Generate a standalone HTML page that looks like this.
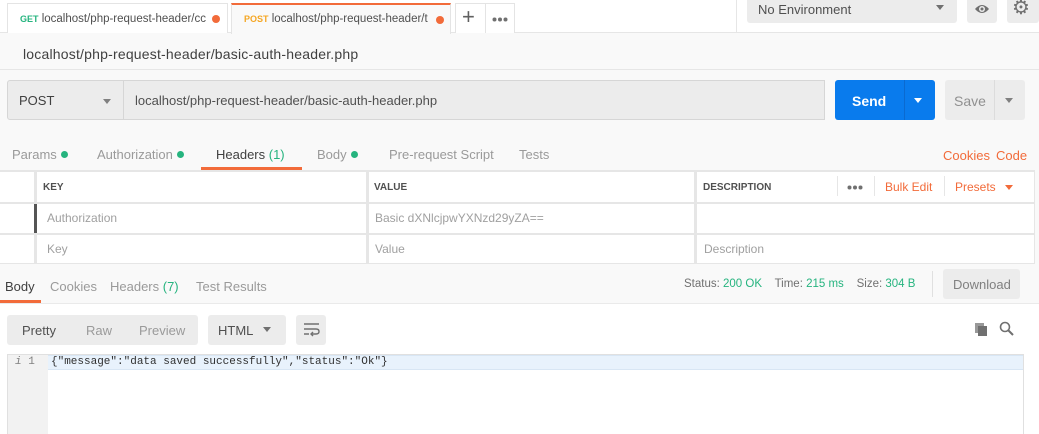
<!DOCTYPE html>
<html><head><style>
*{box-sizing:border-box;margin:0;padding:0}
body{width:1039px;height:434px;overflow:hidden;background:#f9f9f9;font-family:"Liberation Sans",sans-serif;font-size:13px;color:#505050;position:relative}
.a{position:absolute;white-space:nowrap}
.dot{display:inline-block;width:7px;height:7px;border-radius:50%;background:#26b47f;margin-left:4px;vertical-align:1px}
.od{display:inline-block;width:8px;height:8px;border-radius:50%;background:#f26b3a}
.g{color:#26b47f}.o{color:#f26b3a}.l{color:#9a9a9a}
</style></head><body>
<div class="a" style="left:0;top:0;width:1039px;height:33px;background:#fff;border-bottom:1px solid #e6e6e6"></div>
<div class="a" style="left:7px;top:3px;width:221px;height:30px;border:1px solid #e4e4e4;border-bottom:none;background:#fff;padding:9px 12px;font-size:11.5px"><b class="g" style="font-size:9px">GET</b> localhost/php-request-header/cc</div>
<div class="od a" style="left:212px;top:15px"></div>
<div class="a" style="left:231px;top:3px;width:220px;height:31px;border:1px solid #e4e4e4;border-top:2px solid #f26b3a;border-bottom:none;background:#f9f9f9;padding:8px 12px;font-size:11.5px;overflow:hidden"><b style="color:#f5a623;font-size:9px">POST</b> localhost/php-request-header/t</div>
<div class="od a" style="left:436px;top:16px"></div>
<div class="a" style="left:455px;top:3px;width:60px;height:30px;border:1px solid #e4e4e4;border-bottom:none;background:#fff"></div>
<div class="a" style="left:485px;top:3px;width:1px;height:30px;background:#e4e4e4"></div>
<div class="a" style="left:462px;top:4px;font-size:22px;color:#606060">+</div>
<svg class="a" style="left:492px;top:17px" width="16" height="5"><circle cx="2.5" cy="2.5" r="2" fill="#707070"/><circle cx="8" cy="2.5" r="2" fill="#707070"/><circle cx="13.5" cy="2.5" r="2" fill="#707070"/></svg>
<div class="a" style="left:736px;top:0;width:1px;height:33px;background:#e6e6e6"></div>
<div class="a" style="left:747px;top:-6px;width:210px;height:29px;background:#ececec;border-radius:3px;padding:8px 11px;color:#505050">No Environment</div>
<div class="a" style="left:936px;top:5px;border:4px solid transparent;border-top:5px solid #707070"></div>
<div class="a" style="left:967px;top:-6px;width:30px;height:29px;background:#ececec;border-radius:3px"></div>
<svg class="a" style="left:974px;top:3px" width="16" height="12" viewBox="0 0 16 12"><path d="M1 6Q8-2 15 6Q8 14 1 6Z" fill="#707070"/><circle cx="8" cy="6" r="3" fill="#ececec"/><circle cx="8" cy="6" r="1.5" fill="#707070"/></svg>
<div class="a" style="left:1007px;top:-6px;width:32px;height:29px;background:#ececec;border-radius:3px"></div>
<div class="a" style="left:1012px;top:-5px;font-size:20px;color:#707070">⚙</div>
<div class="a" style="left:23px;top:46px;font-size:14px;color:#404040;letter-spacing:0.2px">localhost/php-request-header/basic-auth-header.php</div>
<div class="a" style="left:0;top:69px;width:1039px;height:1px;background:#e6e6e6"></div>
<div class="a" style="left:7px;top:80px;width:298px;height:40px;border:1px solid #d6d6d6;background:#ececec;border-radius:3px"></div>
<div class="a" style="left:123px;top:80px;width:1px;height:40px;background:#d6d6d6"></div>
<div class="a" style="left:19px;top:93px;color:#404040">POST</div>
<div class="a" style="left:103px;top:99px;border:4px solid transparent;border-top:5px solid #808080"></div>
<div class="a" style="left:124px;top:80px;width:701px;height:40px;border:1px solid #d6d6d6;border-left:none;background:#ececec"></div>
<div class="a" style="left:135px;top:93px;color:#505050">localhost/php-request-header/basic-auth-header.php</div>
<div class="a" style="left:835px;top:80px;width:100px;height:40px;background:#097bed;border-radius:3px"></div>
<div class="a" style="left:904px;top:80px;width:1px;height:40px;background:#0a6ad0"></div>
<div class="a" style="left:852px;top:93px;color:#fff;font-weight:bold;font-size:14px">Send</div>
<div class="a" style="left:914px;top:98px;border:4px solid transparent;border-top:5px solid #fff"></div>
<div class="a" style="left:945px;top:80px;width:80px;height:40px;background:#ececec;border-radius:3px"></div>
<div class="a" style="left:994px;top:80px;width:1px;height:40px;background:#dcdcdc"></div>
<div class="a" style="left:954px;top:93px;color:#909090;font-size:14px">Save</div>
<div class="a" style="left:1005px;top:98px;border:4px solid transparent;border-top:5px solid #808080"></div>
<div class="a l" style="left:12px;top:147px">Params<span class="dot"></span></div>
<div class="a l" style="left:97px;top:147px">Authorization<span class="dot"></span></div>
<div class="a" style="left:216px;top:147px;color:#404040">Headers <span class="g">(1)</span></div>
<div class="a" style="left:201px;top:167px;width:101px;height:3px;background:#f26b3a"></div>
<div class="a l" style="left:317px;top:147px">Body<span class="dot"></span></div>
<div class="a l" style="left:389px;top:147px">Pre-request Script</div>
<div class="a l" style="left:519px;top:147px">Tests</div>
<div class="a o" style="left:943px;top:148px">Cookies</div>
<div class="a o" style="left:996px;top:148px">Code</div>
<div class="a" style="left:0;top:170px;width:1035px;height:94px;background:#e6e6e6"></div>
<div class="a" style="left:0;top:172px;width:34px;height:30px;background:#fff"></div>
<div class="a" style="left:37px;top:172px;width:329px;height:30px;background:#fff"></div>
<div class="a" style="left:369px;top:172px;width:325px;height:30px;background:#fff"></div>
<div class="a" style="left:697px;top:172px;width:337px;height:30px;background:#fff"></div>
<div class="a" style="left:0;top:204px;width:34px;height:29px;background:#fff"></div>
<div class="a" style="left:37px;top:204px;width:329px;height:29px;background:#fff"></div>
<div class="a" style="left:369px;top:204px;width:325px;height:29px;background:#fff"></div>
<div class="a" style="left:697px;top:204px;width:337px;height:29px;background:#fff"></div>
<div class="a" style="left:0;top:235px;width:34px;height:28px;background:#fff"></div>
<div class="a" style="left:37px;top:235px;width:329px;height:28px;background:#fff"></div>
<div class="a" style="left:369px;top:235px;width:325px;height:28px;background:#fff"></div>
<div class="a" style="left:697px;top:235px;width:337px;height:28px;background:#fff"></div>
<div class="a" style="left:34px;top:204px;width:3px;height:29px;background:#555"></div>
<div class="a" style="left:43px;top:182px;font-size:10px;font-weight:bold;color:#505050">KEY</div>
<div class="a" style="left:374px;top:182px;font-size:10px;font-weight:bold;color:#505050">VALUE</div>
<div class="a" style="left:703px;top:182px;font-size:10px;font-weight:bold;color:#505050">DESCRIPTION</div>
<div class="a" style="left:837px;top:176px;width:1px;height:20px;background:#e6e6e6"></div>
<svg class="a" style="left:847px;top:185px" width="16" height="5"><circle cx="2.5" cy="2.5" r="2" fill="#707070"/><circle cx="8" cy="2.5" r="2" fill="#707070"/><circle cx="13.5" cy="2.5" r="2" fill="#707070"/></svg>
<div class="a" style="left:874px;top:176px;width:1px;height:20px;background:#e6e6e6"></div>
<div class="a o" style="left:885px;top:180px;font-size:12px">Bulk Edit</div>
<div class="a" style="left:944px;top:176px;width:1px;height:20px;background:#e6e6e6"></div>
<div class="a o" style="left:955px;top:180px;font-size:12px">Presets</div>
<div class="a" style="left:1005px;top:185px;border:4px solid transparent;border-top:5px solid #f26b3a"></div>
<div class="a" style="left:47px;top:211px;color:#a0a0a0;font-size:12px">Authorization</div>
<div class="a" style="left:375px;top:211px;color:#a0a0a0;font-size:12px">Basic dXNlcjpwYXNzd29yZA==</div>
<div class="a" style="left:47px;top:242px;color:#a0a0a0;font-size:12px">Key</div>
<div class="a" style="left:375px;top:242px;color:#a0a0a0;font-size:12px">Value</div>
<div class="a" style="left:704px;top:242px;color:#a0a0a0;font-size:12px">Description</div>
<div class="a" style="left:5px;top:279px;color:#404040">Body</div>
<div class="a" style="left:0;top:300px;width:41px;height:3px;background:#f26b3a"></div>
<div class="a l" style="left:50px;top:279px">Cookies</div>
<div class="a l" style="left:110px;top:279px">Headers <span class="g">(7)</span></div>
<div class="a l" style="left:196px;top:279px">Test Results</div>
<div class="a" style="left:684px;top:278px;font-size:11.5px;color:#707070">Status: <span class="g">200 OK</span>&nbsp;&nbsp;&nbsp; Time: <span class="g">215 ms</span>&nbsp;&nbsp;&nbsp; Size: <span class="g">304 B</span></div>
<div class="a" style="left:932px;top:271px;width:1px;height:26px;background:#e0e0e0"></div>
<div class="a" style="left:943px;top:269px;width:77px;height:30px;background:#ececec;border-radius:3px;padding:8px 10px;color:#808080">Download</div>
<div class="a" style="left:0;top:303px;width:1039px;height:131px;background:#fff;border-top:1px solid #eaeaea"></div>
<div class="a" style="left:7px;top:315px;width:191px;height:30px;background:#ececec;border-radius:3px"></div>
<div class="a" style="left:22px;top:323px;color:#505050">Pretty</div>
<div class="a l" style="left:86px;top:323px">Raw</div>
<div class="a l" style="left:139px;top:323px">Preview</div>
<div class="a" style="left:208px;top:315px;width:78px;height:30px;background:#ececec;border-radius:3px"></div>
<div class="a" style="left:218px;top:323px;color:#505050">HTML</div>
<div class="a" style="left:263px;top:327px;border:4px solid transparent;border-top:5px solid #707070"></div>
<div class="a" style="left:296px;top:315px;width:30px;height:30px;background:#ececec;border-radius:3px"></div>
<svg class="a" style="left:303px;top:322px" width="17" height="15" viewBox="0 0 17 15"><path d="M1 2H16M1 7H13Q16 7 16 9.5Q16 12 13 12H9M1 12H6" stroke="#707070" stroke-width="1.4" fill="none"/><path d="M10 10L8 12L10 14" stroke="#707070" stroke-width="1.4" fill="none"/></svg>
<svg class="a" style="left:974px;top:322px" width="14" height="14" viewBox="0 0 14 14"><rect x="1" y="1" width="9" height="10" fill="#999"/><rect x="4" y="4" width="9" height="10" fill="#707070"/></svg>
<svg class="a" style="left:999px;top:321px" width="15" height="15" viewBox="0 0 15 15"><circle cx="6" cy="6" r="4.5" stroke="#707070" stroke-width="1.6" fill="none"/><path d="M9.5 9.5L14 14" stroke="#707070" stroke-width="2"/></svg>
<div class="a" style="left:7px;top:354px;width:1017px;height:80px;border:1px solid #e0e0e0;border-bottom:none"></div>
<div class="a" style="left:8px;top:355px;width:40px;height:79px;background:#f2f2f2"></div>
<div class="a" style="left:48px;top:355px;width:975px;height:15px;background:#e8f2fc;border-top:1px solid #d8e6f4;border-bottom:1px solid #d8e6f4"></div>
<div class="a" style="left:15px;top:356px;font-family:'Liberation Mono',monospace;font-size:11px;color:#808080"><i>i</i> 1</div>
<div class="a" style="left:51px;top:356px;font-family:'Liberation Mono',monospace;font-size:11px;color:#303030">{"message":"data saved successfully","status":"Ok"}</div>
</body></html>
